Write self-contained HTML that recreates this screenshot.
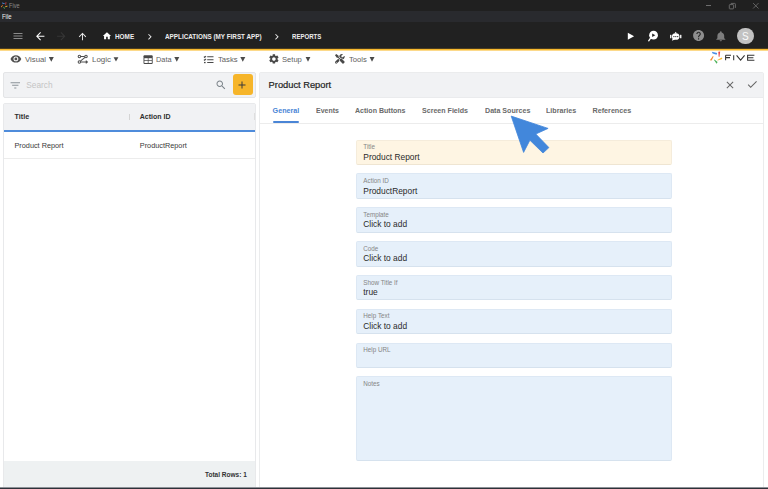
<!DOCTYPE html>
<html><head><meta charset="utf-8">
<style>
*{margin:0;padding:0;box-sizing:border-box}
html,body{width:768px;height:489px;overflow:hidden;background:#fff;font-family:"Liberation Sans",sans-serif}
.a{position:absolute}
.t{position:absolute;line-height:1;white-space:nowrap;font-family:"Liberation Sans",sans-serif}
svg{position:absolute;overflow:visible}
</style></head><body>
<!-- title bar -->
<div class="a" style="left:0;top:0;width:768px;height:11px;background:#202020"></div>
<div class="a" style="left:0;top:11px;width:768px;height:11px;background:#292a2e"></div>
<div class="t" style="left:2.2px;top:13.9px;font-size:6.9px;color:#f0f0f0;transform-origin:0 0;transform:scaleX(0.86)">File</div>
<div class="t" style="left:8.9px;top:3.4px;font-size:6.5px;color:#8a8a8a;transform-origin:0 0;transform:scaleX(0.87)">Five</div>
<!-- toolbar -->
<div class="a" style="left:0;top:22px;width:768px;height:27px;background:#212121"></div>
<div class="a" style="left:0;top:48px;width:768px;height:1px;background:#4a3d20"></div>
<div class="a" style="left:0;top:49px;width:768px;height:1px;background:#f8b92e"></div>
<div class="a" style="left:0;top:50px;width:768px;height:1px;background:#fcd98a"></div>

<div class="t" style="left:115px;top:33.2px;font-size:7.6px;font-weight:bold;color:#ededed;transform-origin:0 0;transform:scaleX(0.84)">HOME</div>
<div class="t" style="left:165px;top:33.2px;font-size:7.6px;font-weight:bold;color:#ededed;transform-origin:0 0;transform:scaleX(0.834)">APPLICATIONS (MY FIRST APP)</div>
<div class="t" style="left:292px;top:33.2px;font-size:7.6px;font-weight:bold;color:#ededed;transform-origin:0 0;transform:scaleX(0.80)">REPORTS</div>

<!-- menu row -->
<div class="t" style="left:25px;top:56.1px;font-size:7.8px;color:#606060">Visual</div>
<div class="t" style="left:91.5px;top:56.1px;font-size:7.8px;color:#606060;transform-origin:0 0;transform:scaleX(1.02)">Logic</div>
<div class="t" style="left:155.8px;top:56.1px;font-size:7.8px;color:#606060;transform-origin:0 0;transform:scaleX(0.944)">Data</div>
<div class="t" style="left:217.6px;top:56.1px;font-size:7.8px;color:#606060;transform-origin:0 0;transform:scaleX(0.985)">Tasks</div>
<div class="t" style="left:282.4px;top:56.1px;font-size:7.8px;color:#606060;transform-origin:0 0;transform:scaleX(0.973)">Setup</div>
<div class="t" style="left:348.6px;top:56.1px;font-size:7.8px;color:#606060;transform-origin:0 0;transform:scaleX(0.982)">Tools</div>

<!-- left panel -->
<div class="a" style="left:3px;top:72px;width:253px;height:26px;background:#f1f2f4;border:1px solid #e4e5e7;border-radius:2px"></div>
<div class="t" style="left:26.3px;top:80.9px;font-size:8.3px;color:#c4c4c4">Search</div>
<div class="a" style="left:232.6px;top:74px;width:20.6px;height:21px;background:#f6b52a;border-radius:3px"></div>

<div class="a" style="left:3px;top:103px;width:253px;height:386px;background:#fff;border:1px solid #e8e9eb;border-radius:2px 2px 0 0"></div>
<div class="a" style="left:4px;top:104px;width:251px;height:26px;background:#f1f2f4"></div>
<div class="a" style="left:4px;top:130px;width:251px;height:2px;background:#4f8cdb"></div>
<div class="a" style="left:129px;top:114px;width:1px;height:6px;background:#d4d4d4"></div><div class="a" style="left:254px;top:113px;width:1px;height:7px;background:#dedede"></div>
<div class="t" style="left:14.5px;top:113.4px;font-size:7.2px;font-weight:bold;color:#2e2e2e">Title</div>
<div class="t" style="left:139.8px;top:113.4px;font-size:7.0px;font-weight:bold;color:#2e2e2e">Action ID</div>
<div class="t" style="left:14.5px;top:141.6px;font-size:7.3px;color:#3a3a3a">Product Report</div>
<div class="t" style="left:139.8px;top:141.6px;font-size:7.3px;color:#3a3a3a">ProductReport</div>
<div class="a" style="left:4px;top:158px;width:251px;height:1px;background:#ececec"></div>
<div class="a" style="left:4px;top:461px;width:251px;height:26px;background:#eef1f2"></div>
<div class="t" style="left:205px;top:472.1px;font-size:6.5px;font-weight:bold;color:#333">Total Rows: 1</div>

<!-- right panel -->
<div class="a" style="left:259px;top:72px;width:505px;height:417px;background:#fff;border:1px solid #ebeced;border-radius:2px 2px 0 0"></div>
<div class="a" style="left:260px;top:73px;width:503px;height:24px;background:#f1f2f4"></div>
<div class="a" style="left:260px;top:97px;width:503px;height:1px;background:#eaebed"></div>
<div class="t" style="left:268.6px;top:80.7px;font-size:9.3px;color:#1e1e1e;-webkit-text-stroke:0.2px #1e1e1e">Product Report</div>
<div class="a" style="left:260px;top:122.5px;width:503px;height:1px;background:#ececec"></div>

<div class="t" style="left:272.6px;top:107.2px;font-size:7.2px;font-weight:bold;color:#4a85d6;transform-origin:0 0;transform:scaleX(1.0)">General</div>
<div class="t" style="left:315.5px;top:107.2px;font-size:7.2px;font-weight:bold;color:#6a6a6a;transform-origin:0 0;transform:scaleX(0.969)">Events</div>
<div class="t" style="left:354.6px;top:107.2px;font-size:7.2px;font-weight:bold;color:#6a6a6a;transform-origin:0 0;transform:scaleX(0.981)">Action Buttons</div>
<div class="t" style="left:421.6px;top:107.2px;font-size:7.2px;font-weight:bold;color:#6a6a6a;transform-origin:0 0;transform:scaleX(0.984)">Screen Fields</div>
<div class="t" style="left:484.6px;top:107.2px;font-size:7.2px;font-weight:bold;color:#6a6a6a;transform-origin:0 0;transform:scaleX(0.988)">Data Sources</div>
<div class="t" style="left:546.3px;top:107.2px;font-size:7.2px;font-weight:bold;color:#6a6a6a;transform-origin:0 0;transform:scaleX(0.993)">Libraries</div>
<div class="t" style="left:592.5px;top:107.2px;font-size:7.2px;font-weight:bold;color:#6a6a6a;transform-origin:0 0;transform:scaleX(1.0)">References</div>
<div class="a" style="left:272.5px;top:121px;width:26px;height:2px;background:#4a85d6;border-radius:1px"></div>

<div class="a" style="left:356px;top:139.7px;width:316px;height:25.6px;background:#fef5e3;border:1px solid #f5ecdb;border-bottom-color:#efe5d2;border-radius:2px"></div>
<div class="t" style="left:363.3px;top:143.90px;font-size:6.3px;color:#858585">Title</div>
<div class="t" style="left:363.3px;top:153.10px;font-size:8.4px;color:#2a2a2a">Product Report</div>
<div class="a" style="left:356px;top:173.1px;width:316px;height:25.6px;background:#e6f0fa;border:1px solid #dde8f4;border-bottom-color:#d6e2ee;border-radius:2px"></div>
<div class="t" style="left:363.3px;top:177.90px;font-size:6.3px;color:#858585">Action ID</div>
<div class="t" style="left:363.3px;top:187.10px;font-size:8.4px;color:#2a2a2a">ProductReport</div>
<div class="a" style="left:356px;top:207.1px;width:316px;height:25.6px;background:#e6f0fa;border:1px solid #dde8f4;border-bottom-color:#d6e2ee;border-radius:2px"></div>
<div class="t" style="left:363.3px;top:211.90px;font-size:6.3px;color:#858585">Template</div>
<div class="t" style="left:363.3px;top:220.10px;font-size:8.4px;color:#2a2a2a">Click to add</div>
<div class="a" style="left:356px;top:241.0px;width:316px;height:25.6px;background:#e6f0fa;border:1px solid #dde8f4;border-bottom-color:#d6e2ee;border-radius:2px"></div>
<div class="t" style="left:363.3px;top:245.90px;font-size:6.3px;color:#858585">Code</div>
<div class="t" style="left:363.3px;top:254.10px;font-size:8.4px;color:#2a2a2a">Click to add</div>
<div class="a" style="left:356px;top:274.9px;width:316px;height:25.6px;background:#e6f0fa;border:1px solid #dde8f4;border-bottom-color:#d6e2ee;border-radius:2px"></div>
<div class="t" style="left:363.3px;top:279.90px;font-size:6.3px;color:#858585">Show Title If</div>
<div class="t" style="left:363.3px;top:288.10px;font-size:8.4px;color:#2a2a2a">true</div>
<div class="a" style="left:356px;top:308.8px;width:316px;height:25.6px;background:#e6f0fa;border:1px solid #dde8f4;border-bottom-color:#d6e2ee;border-radius:2px"></div>
<div class="t" style="left:363.3px;top:312.90px;font-size:6.3px;color:#858585">Help Text</div>
<div class="t" style="left:363.3px;top:322.10px;font-size:8.4px;color:#2a2a2a">Click to add</div>
<div class="a" style="left:356px;top:342.5px;width:316px;height:25.6px;background:#e6f0fa;border:1px solid #dde8f4;border-bottom-color:#d6e2ee;border-radius:2px"></div>
<div class="t" style="left:363.3px;top:346.90px;font-size:6.3px;color:#858585">Help URL</div>
<div class="a" style="left:356px;top:376.0px;width:316px;height:84.7px;background:#e6f0fa;border:1px solid #dde8f4;border-bottom-color:#d6e2ee;border-radius:2px"></div>
<div class="t" style="left:363.3px;top:380.90px;font-size:6.3px;color:#858585">Notes</div>
<!-- ICONS -->
<!-- title logo -->
<svg style="left:0;top:0" width="10" height="11" viewBox="0 0 10 11"><g transform="translate(-1.27 1.24) scale(0.54)">
<path d="M5.8 2.3 L11.2 3.6 L10.6 5.2 L6.6 4.0 Z" fill="#4a8ee6"/>
<path d="M12.3 2.2 L14.2 2.0 L13.4 7.4 L12.7 7.2 Z" fill="#e64545"/>
<path d="M15.7 7.9 L16.4 9.6 L11.6 11.0 L11.3 10.4 Z" fill="#f6b830"/>
<path d="M8.4 10.0 L11.6 12.5 L10.6 14.2 L8.0 10.6 Z" fill="#4db25a"/>
<path d="M3.9 10.8 L6.9 6.4 L7.6 7.1 L5.6 11.0 Z" fill="#f58a2e"/>
</g></svg>
<!-- window controls -->
<div class="a" style="left:705.5px;top:5px;width:5.5px;height:1px;background:#6e6e6e"></div>
<svg style="left:728px;top:2px" width="9" height="9" viewBox="0 0 9 9"><rect x="1.3" y="2.6" width="4.3" height="4.3" rx="0.6" fill="none" stroke="#6e6e6e" stroke-width="0.9"/><path d="M2.8 1.4 H6.6 Q7.4 1.4 7.4 2.2 V5.9" fill="none" stroke="#6e6e6e" stroke-width="0.9"/></svg>
<svg style="left:752px;top:2px" width="8" height="8" viewBox="0 0 8 8"><path d="M1.1 1.1 L6.5 6.5 M6.5 1.1 L1.1 6.5" stroke="#6e6e6e" stroke-width="0.85"/></svg>
<!-- toolbar icons -->
<svg style="left:11.5px;top:30px" width="12" height="12" viewBox="0 0 24 24"><path fill="#8a8a8a" d="M3 18h18v-2H3v2zm0-5h18v-2H3v2zm0-7v2h18V6H3z"/></svg>
<svg style="left:33.9px;top:29.9px" width="12.5" height="12.5" viewBox="0 0 24 24"><path fill="#ffffff" d="M20 11H7.83l5.59-5.59L12 4l-8 8 8 8 1.41-1.41L7.83 13H20v-2z"/></svg>
<svg style="left:54.9px;top:29.9px" width="12.5" height="12.5" viewBox="0 0 24 24"><path fill="#363636" d="M12 4l-1.41 1.41L16.17 11H4v2h12.17l-5.58 5.59L12 20l8-8z"/></svg>
<svg style="left:77.2px;top:31px" width="11" height="11" viewBox="0 0 24 24"><path fill="#f0f0f0" d="M4 12l1.41 1.41L11 7.83V20h2V7.83l5.58 5.59L20 12l-8-8-8 8z"/></svg>
<svg style="left:102.3px;top:31.3px" width="9.9" height="9.9" viewBox="0 0 24 24"><path fill="#ffffff" d="M10 20v-6h4v6h5v-8h3L12 3 2 12h3v8z"/></svg>
<svg style="left:143.5px;top:30.6px" width="11.5" height="11.5" viewBox="0 0 24 24"><path fill="#e8e8e8" d="M10 6L8.59 7.41 13.17 12l-4.58 4.59L10 18l6-6z"/></svg>
<svg style="left:271px;top:30.6px" width="11.5" height="11.5" viewBox="0 0 24 24"><path fill="#e8e8e8" d="M10 6L8.59 7.41 13.17 12l-4.58 4.59L10 18l6-6z"/></svg>

<svg style="left:622px;top:26px" width="64" height="20" viewBox="0 0 64 20">
<path d="M5.8 6.7 L12.1 10.2 L5.8 13.75 Z" fill="#fff"/>
<circle cx="31.55" cy="9.2" r="4.4" fill="#fff"/>
<path d="M30.2 7.6 L33.3 9.35 L30.2 11.1 Z" fill="#222"/>
<path d="M28.4 12.3 L26.7 14.8" stroke="#fff" stroke-width="1.3" stroke-linecap="round"/>
<ellipse cx="53.7" cy="10.5" rx="3.8" ry="3.35" fill="#fff"/>
<path d="M53.7 5.8 L52.5 7.6 L54.9 7.6 Z" fill="#fff"/>
<rect x="48.1" y="8.7" width="1.3" height="3.6" rx="0.4" fill="#fff"/>
<rect x="58.1" y="8.7" width="1.3" height="3.6" rx="0.4" fill="#fff"/>
<path d="M50.8 12.2 L49.9 14.8 L53 13.4 Z" fill="#fff"/>
<circle cx="51.9" cy="10.6" r="0.65" fill="#212121"/><circle cx="53.8" cy="10.6" r="0.65" fill="#212121"/><circle cx="55.7" cy="10.6" r="0.65" fill="#212121"/>
</svg>
<svg style="left:691.5px;top:29.4px" width="13.2" height="13.2" viewBox="0 0 24 24"><path fill="#8e8e8e" d="M12 2C6.48 2 2 6.48 2 12s4.480 10 10 10 10-4.48 10-10S17.52 2 12 2zm1 17h-2v-2h2v2zm2.07-7.75l-.9.92C13.45 12.9 13 13.5 13 15h-2v-.5c0-1.1.45-2.1 1.17-2.830l1.24-1.26c.37-.36.59-.86.59-1.41 0-1.1-.9-2-2-2s-2 .9-2 2H8c0-2.21 1.79-4 4-4s4 1.79 4 4c0 .88-.36 1.68-.93 2.25z"/></svg>
<svg style="left:713.6px;top:30px" width="13.6" height="12.4" viewBox="0 0 24 24" preserveAspectRatio="none"><path fill="#7d7d7d" d="M12 22c1.1 0 2-.9 2-2h-4c0 1.1.89 2 2 2zm6-6v-5c0-3.07-1.640-5.64-4.5-6.32V4c0-.83-.67-1.5-1.5-1.5s-1.5.67-1.5 1.5v.68C7.63 5.36 6 7.92 6 11v5l-2 2v1h16v-1l-2-2z"/></svg>
<div class="a" style="left:736.85px;top:27.75px;width:16.7px;height:16.7px;border-radius:50%;background:#c2c2c2"></div>
<div class="t" style="left:741.9px;top:31.6px;font-size:10px;color:#fafafa">S</div>

<!-- menu icons -->
<svg style="left:10.3px;top:52.9px" width="11.8" height="11.8" viewBox="0 0 24 24"><path fill="#505050" d="M12 4.5C7 4.5 2.73 7.610 1 12c1.73 4.39 6 7.5 11 7.5s9.27-3.11 11-7.5c-1.73-4.39-6-7.5-11-7.5zM12 17c-2.76 0-5-2.24-5-5s2.24-5 5-5 5 2.24 5 5-2.24 5-5 5zm0-8c-1.66 0-3 1.34-3 3s1.34 3 3 3 3-1.34 3-3-1.34-3-3-3z"/></svg>
<svg style="left:74px;top:52px" width="20" height="14" viewBox="0 0 20 14">
<g fill="none" stroke="#505050" stroke-width="1.05">
<circle cx="5.4" cy="4.4" r="1.25"/><circle cx="12" cy="4.4" r="1.25"/><circle cx="5.4" cy="10" r="1.25"/>
<path d="M6.7 4.4 H10.7 M11 5.3 L6.4 9.1 M6.7 10 H13.3 M11.8 8.6 L13.4 10 L11.8 11.4"/>
</g></svg>
<svg style="left:142.5px;top:54.5px" width="10" height="9.2" viewBox="0 0 10 9.2">
<rect x="0.5" y="0.3" width="9.2" height="8.6" rx="0.9" fill="#484848"/>
<rect x="1.4" y="3.2" width="3.4" height="1.9" fill="#fff"/><rect x="5.5" y="3.2" width="3.3" height="1.9" fill="#fff"/>
<rect x="1.4" y="5.8" width="3.4" height="2.2" fill="#fff"/><rect x="5.5" y="5.8" width="3.3" height="2.2" fill="#fff"/>
</svg>
<svg style="left:203px;top:54.5px" width="12" height="10" viewBox="0 0 12 10">
<g stroke="#484848" stroke-width="1.1" fill="none">
<path d="M4.2 1.8 H10.5 M4.2 4.7 H10.5 M4.2 7.5 H10.5"/>
<path d="M0.9 1.7 L1.7 2.4 L3 1 M0.9 4.6 L1.7 5.3 L3 3.9"/>
</g><rect x="1" y="6.9" width="1.6" height="1.3" fill="#484848"/>
</svg>
<svg style="left:268.2px;top:53.3px" width="11.8" height="11.8" viewBox="0 0 24 24"><path fill="#484848" d="M19.14 12.94c.04-.3.06-.61.06-.94 0-.32-.02-.64-.07-.94l2.03-1.58c.18-.14.23-.41.12-.61l-1.92-3.32c-.12-.22-.37-.29-.59-.22l-2.390.96c-.5-.38-1.03-.7-1.62-.94l-.36-2.54c-.04-.24-.24-.41-.48-.41h-3.84c-.24 0-.43.17-.47.41l-.36 2.54c-.59.24-1.13.57-1.62.94l-2.39-.96c-.22-.08-.47 0-.59.22L2.74 8.87c-.12.21-.08.47.12.61l2.03 1.58c-.05.3-.09.63-.09.94s.02.64.07.94l-2.03 1.58c-.18.14-.23.41-.12.61l1.92 3.32c.12.22.37.29.59.22l2.39-.96c.5.38 1.03.7 1.62.94l.36 2.54c.05.24.24.41.48.41h3.84c.24 0 .44-.17.47-.41l.36-2.54c.59-.24 1.13-.56 1.62-.94l2.39.96c.22.08.47 0 .59-.22l1.92-3.32c.12-.22.07-.47-.12-.61l-2.01-1.58zM12 15.6c-1.98 0-3.6-1.62-3.6-3.6s1.62-3.6 3.6-3.6 3.6 1.62 3.6 3.6-1.62 3.6-3.6 3.6z"/></svg>
<svg style="left:335px;top:54.4px" width="9.7" height="9.7" viewBox="0 0 512 512"><path fill="#484848" d="M501.1 395.7L384 278.6c-23.1-23.1-57.6-27.6-85.4-13.9L192 158.1V96L64 0 0 64l96 128h62.1l106.6 106.6c-13.6 27.8-9.2 62.3 13.9 85.4l117.1 117.1c14.6 14.6 38.2 14.6 52.7 0l52.7-52.7c14.5-14.6 14.5-38.200 0-52.7zM331.7 225c28.3 0 54.9 11 74.9 31l19.4 19.4c15.8-6.9 30.8-16.5 43.8-29.5 37.1-37.1 49.7-89.3 37.9-136.7-2.2-9-13.5-12.1-20.1-5.5l-74.4 74.4-67.9-11.3L334 98.9l74.4-74.4c6.6-6.6 3.4-17.9-5.7-20.2-47.4-11.7-99.6.9-136.6 37.9-28.5 28.5-41.9 66.1-41.2 103.6l82.1 82.1c8.1-1.9 16.5-2.9 24.7-2.9zm-103.9 82l-56.7-56.7L18.7 402.8c-25 25-25 65.5 0 90.5s65.5 25 90.5 0l123.6-123.6c-7.6-19.9-9.9-41.6-5-62.7zM64 472c-13.2 0-24-10.8-24-24 0-13.3 10.7-24 24-24s24 10.7 24 24c0 13.2-10.7 24-24 24z"/></svg>
<svg style="left:0;top:52px" width="400" height="14" viewBox="0 0 400 14">
<g fill="#4a4a4a">
<path d="M48.8 5 H53.8 L51.3 9.7 Z"/>
<path d="M113.6 5.2 H118.4 L116 9.6 Z"/>
<path d="M174.3 5 H179.3 L176.8 9.7 Z"/>
<path d="M240.3 5 H245.3 L242.8 9.7 Z"/>
<path d="M305.6 5 H310.4 L308 9.7 Z"/>
<path d="M369.6 5 H374.5 L372 9.7 Z"/>
</g></svg>
<!-- FIVE logo -->
<svg style="left:706px;top:49px" width="56" height="16" viewBox="0 0 56 16"><g transform="translate(0 0.5)">
<path d="M5.8 2.3 L11.2 3.6 L10.6 5.2 L6.6 4.0 Z" fill="#4a8ee6"/>
<path d="M12.3 2.2 L14.2 2.0 L13.4 7.4 L12.7 7.2 Z" fill="#e64545"/>
<path d="M15.7 7.9 L16.4 9.6 L11.6 11.0 L11.3 10.4 Z" fill="#f6b830"/>
<path d="M8.4 10.0 L11.6 12.5 L10.6 14.2 L8.0 10.6 Z" fill="#4db25a"/>
<path d="M3.9 10.8 L6.9 6.4 L7.6 7.1 L5.6 11.0 Z" fill="#f58a2e"/>
</g><g fill="none" stroke="#333" stroke-width="1.05">
<path d="M19.6 6.3 H25 M19.6 6.3 V11.2 M19.6 8.6 H24"/>
<path d="M27.7 6.3 V11.2"/>
<path d="M30.6 6.3 L34.6 11.2 L38.6 6.3"/>
<path d="M48.4 6.3 H41.6 V11.2 H48.4 M41.6 8.7 H47.4"/>
</g></svg>

<!-- search -->
<svg style="left:8.6px;top:78.8px" width="12.6" height="12.6" viewBox="0 0 24 24"><path fill="#8b9298" d="M10 18h4v-2h-4v2zM3 6v2h18V6H3zm3 7h12v-2H6v2z"/></svg>
<svg style="left:215px;top:78.8px" width="12" height="12" viewBox="0 0 24 24"><path fill="#7a8288" d="M15.5 14h-.79l-.28-.27C15.41 12.59 16 11.110 16 9.5 16 5.91 13.09 3 9.5 3S3 5.91 3 9.5 5.91 16 9.5 16c1.61 0 3.09-.59 4.23-1.57l.27.28v.79l5 4.99L20.49 19l-4.99-5zm-6 0C7.01 14 5 11.99 5 9.5S7.01 5 9.5 5 14 7.01 14 9.5 11.99 14 9.5 14z"/></svg>
<svg style="left:236.4px;top:78.6px" width="12" height="12" viewBox="0 0 24 24"><path fill="#3a3a3a" d="M19 13h-6v6h-2v-6H5v-2h6V5h2v6h6v2z"/></svg>

<!-- X and check -->
<svg style="left:723.5px;top:78.8px" width="12" height="12" viewBox="0 0 24 24"><path fill="#666" d="M19 6.41L17.59 5 12 10.59 6.41 5 5 6.41 10.59 12 5 17.59 6.41 19 12 13.41 17.59 19 19 17.59 13.41 12z"/></svg>
<svg style="left:745.5px;top:77.5px" width="12.5" height="12.5" viewBox="0 0 24 24"><path fill="#666" d="M9 16.17L4.83 12l-1.42 1.41L9 19 21 7l-1.41-1.41z"/></svg>

<!-- bottom line -->
<div class="a" style="left:0;top:487px;width:768px;height:1px;background:#8e9197"></div><div class="a" style="left:0;top:488px;width:768px;height:1px;background:#2e3139"></div>

<!-- cursor -->
<svg style="left:0;top:0" width="768" height="489" viewBox="0 0 768 489">
<path d="M511.2 116.1 L548.1 128.4 L535.8 134 L548.9 147.6 L543 153 L529.9 140.2 L523.6 152.4 Z" fill="#4287db" stroke="#4287db" stroke-width="0.8" stroke-linejoin="round"/>
</svg>
</body></html>
